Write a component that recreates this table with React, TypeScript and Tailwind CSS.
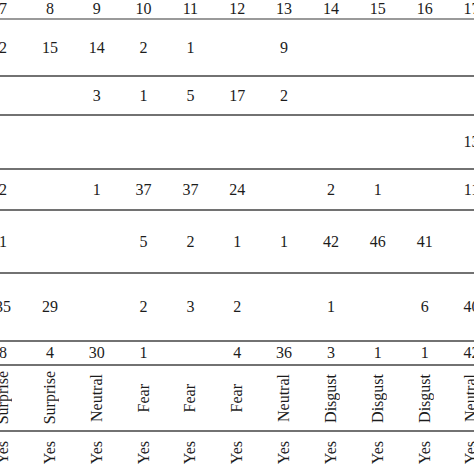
import React from 'react';

const cols = ['7', '8', '9', '10', '11', '12', '13', '14', '15', '16', '17'];

// each row: height (px, incl. 2px rule), values by column
const rows: { h: string; vals: string[] }[] = [
    { h: 'h-[57px]', vals: ['2', '15', '14', '2', '1', '', '9', '', '', '', ''] },
    { h: 'h-[39px]', vals: ['', '', '3', '1', '5', '17', '2', '', '', '', ''] },
    { h: 'h-[54px]', vals: ['', '', '', '', '', '', '', '', '', '', '13'] },
    { h: 'h-[41px]', vals: ['2', '', '1', '37', '37', '24', '', '2', '1', '', '11'] },
    { h: 'h-[63px]', vals: ['1', '', '', '5', '2', '1', '1', '42', '46', '41', ''] },
    { h: 'h-[68px]', vals: ['35', '29', '', '2', '3', '2', '', '1', '', '6', '40'] },
    { h: 'h-[24px]', vals: ['8', '4', '30', '1', '', '4', '36', '3', '1', '1', '42'] },
];

const emotions = ['Surprise', 'Surprise', 'Neutral', 'Fear', 'Fear', 'Fear', 'Neutral', 'Disgust', 'Disgust', 'Disgust', 'Neutral'];

const Cell: React.FC<{ children?: React.ReactNode }> = ({ children }) => (
    <div className="w-[46.85px] shrink-0 flex items-center justify-center">{children}</div>
);

export default function App() {
    return (
        <div
            className="w-[474px] h-[474px] overflow-hidden bg-white text-[#1c1c1c] text-[16px]"
            style={{ fontFamily: '"Liberation Serif", "DejaVu Serif", serif' }}
        >
            <div className="ml-[-20.4px] flex flex-col">
                <div className="h-[20px] flex border-b-2 border-[#9a9a9a] leading-[10px]">
                    {cols.map((c) => (
                        <Cell key={c}>{c}</Cell>
                    ))}
                </div>
                {rows.map((r, i) => (
                    <div key={i} className={`${r.h} flex border-b-2 border-[#727272]`}>
                        {r.vals.map((v, j) => (
                            <Cell key={j}>{v}</Cell>
                        ))}
                    </div>
                ))}
                <div className="h-[66px] flex border-b-2 border-[#727272]">
                    {emotions.map((e, j) => (
                        <Cell key={j}>
                            <span className="[writing-mode:vertical-rl] rotate-180 leading-none">{e}</span>
                        </Cell>
                    ))}
                </div>
                <div className="h-[42px] flex">
                    {cols.map((c) => (
                        <Cell key={c}>
                            <span className="[writing-mode:vertical-rl] rotate-180 leading-none">Yes</span>
                        </Cell>
                    ))}
                </div>
            </div>
        </div>
    );
}
